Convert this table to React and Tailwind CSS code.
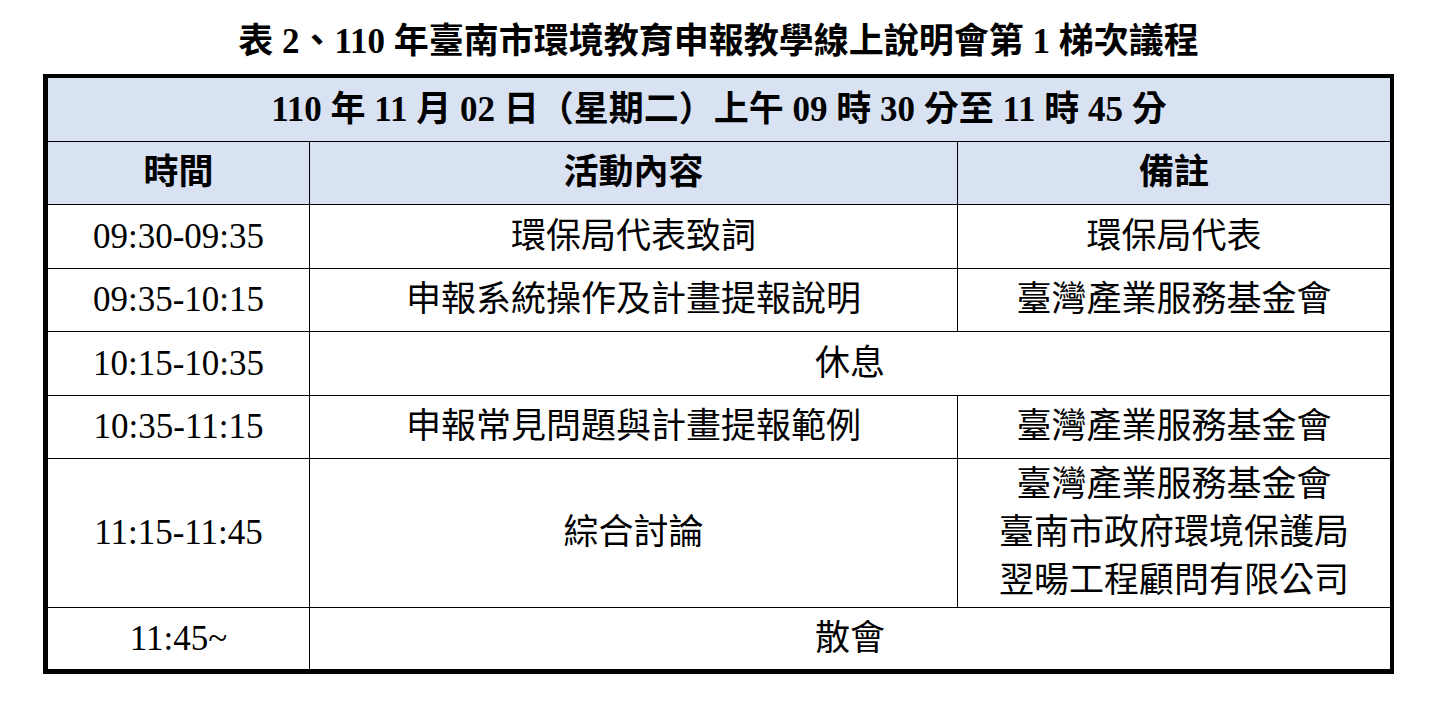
import React from "react";

const font = { fontFamily: "'Liberation Serif', 'Noto Sans CJK TC', serif" };

function Cell({ children, className = "" }) {
  return (
    <div className={"flex items-center justify-center text-center text-[35px] leading-[48px] text-black " + className}>
      {children}
    </div>
  );
}

const rows = [
  { h: "h-[64px]", t: "09:30-09:35", a: "環保局代表致詞", n: "環保局代表" },
  { h: "h-[63px]", t: "09:35-10:15", a: "申報系統操作及計畫提報說明", n: "臺灣產業服務基金會" },
  { h: "h-[64px]", t: "10:15-10:35", a: "休息", span: true },
  { h: "h-[63px]", t: "10:35-11:15", a: "申報常見問題與計畫提報範例", n: "臺灣產業服務基金會" },
  { h: "h-[149px]", t: "11:15-11:45", a: "綜合討論", n: ["臺灣產業服務基金會", "臺南市政府環境保護局", "翌暘工程顧問有限公司"] },
  { h: "h-[62px]", t: "11:45~", a: "散會", span: true },
];

export default function App() {
  return (
    <div className="w-[1443px] h-[701px] bg-white" style={font}>
      <div className="w-[1351px] ml-[43px]">
        <div className="h-[74px] pt-[22px] text-center text-[35px] leading-[40px] font-bold text-black">
          表 2、110 年臺南市環境教育申報教學線上說明會第 1 梯次議程
        </div>
        <div className="border-l-[5px] border-t-4 border-r-4 border-b-[5px] border-black">
          <div className="grid grid-cols-[261px_648px_433px]">
            <Cell className="col-span-3 h-[63px] bg-[#d9e2f3] font-bold">
              110 年 11 月 02 日（星期二）上午 09 時 30 分至 11 時 45 分
            </Cell>
            <Cell className="h-[63px] bg-[#d9e2f3] font-bold border-t border-black">時間</Cell>
            <Cell className="h-[63px] bg-[#d9e2f3] font-bold border-t border-l border-black">活動內容</Cell>
            <Cell className="h-[63px] bg-[#d9e2f3] font-bold border-t border-l border-black">備註</Cell>
            {rows.map((r, i) => (
              <React.Fragment key={i}>
                <Cell className={r.h + " border-t border-black"}>{r.t}</Cell>
                {r.span ? (
                  <Cell className={r.h + " col-span-2 border-t border-l border-black"}>{r.a}</Cell>
                ) : (
                  <>
                    <Cell className={r.h + " border-t border-l border-black"}>{r.a}</Cell>
                    <Cell className={r.h + " border-t border-l border-black flex-col"}>
                      {Array.isArray(r.n) ? r.n.map((x, j) => <div key={j}>{x}</div>) : r.n}
                    </Cell>
                  </>
                )}
              </React.Fragment>
            ))}
          </div>
        </div>
      </div>
    </div>
  );
}
